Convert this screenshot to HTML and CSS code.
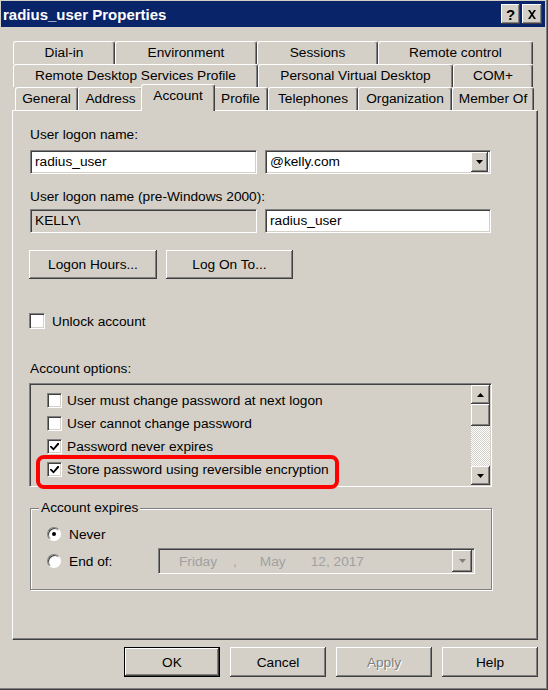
FILE: index.html
```html
<!DOCTYPE html>
<html>
<head>
<meta charset="utf-8">
<link rel="stylesheet" href="styles.css">
</head>
<body>
<div class="window">
  <div class="titlebar">
    <span class="title">radius_user Properties</span>
    <div class="tb-btns">
      <span class="tb-btn tb-help">?</span>
      <span class="tb-btn"><svg width="10" height="9" viewBox="0 0 10 9"><path d="M1 0h2l2 3 2-3h2L6 4.5 9 9H7L5 6 3 9H1l3-4.5z" fill="#000"/></svg></span>
    </div>
  </div>

  <div class="tabs">
    <div class="tab-row row-a">
      <div class="tab w102">Dial-in</div>
      <div class="tab w142">Environment</div>
      <div class="tab w121">Sessions</div>
      <div class="tab w155">Remote control</div>
    </div>
    <div class="tab-row row-a">
      <div class="tab w245">Remote Desktop Services Profile</div>
      <div class="tab w195">Personal Virtual Desktop</div>
      <div class="tab w80">COM+</div>
    </div>
    <div class="tab-row row-c">
      <div class="tab w63">General</div>
      <div class="tab w65">Address</div>
      <div class="tab tab-active">Account</div>
      <div class="tab w55">Profile</div>
      <div class="tab w90">Telephones</div>
      <div class="tab w94">Organization</div>
      <div class="tab w82">Member Of</div>
    </div>
  </div>

  <div class="panel">
    <div class="label">User logon name:</div>
    <div class="field-row gap-top-7">
      <div class="textbox">radius_user</div>
      <div class="textbox combo">
        <span>@kelly.com</span>
        <span class="combo-btn"><svg width="7" height="4" viewBox="0 0 7 4"><path d="M0 0h7L3.5 4z" fill="#000"/></svg></span>
      </div>
    </div>
    <div class="label gap-top-15">User logon name (pre-Windows 2000):</div>
    <div class="field-row gap-top-4">
      <div class="textbox readonly">KELLY\</div>
      <div class="textbox combo-w">radius_user</div>
    </div>
    <div class="btn-row">
      <div class="btn btn-hours">Logon Hours...</div>
      <div class="btn btn-logon">Log On To...</div>
    </div>
    <div class="check-row unlock">
      <span class="checkbox big"></span>
      <span>Unlock account</span>
    </div>
    <div class="label gap-top-32">Account options:</div>
    <div class="listbox">
      <div class="list-items">
        <div class="list-item"><span class="checkbox"></span><span>User must change password at next logon</span></div>
        <div class="list-item"><span class="checkbox"></span><span>User cannot change password</span></div>
        <div class="list-item"><span class="checkbox"><svg width="9" height="8" viewBox="0 0 9 8"><path d="M0 3h1.5l2 2L7.5 0H9v1.5L3.5 7.5 0 4z" fill="#000"/></svg></span><span>Password never expires</span></div>
        <div class="list-item"><span class="checkbox"><svg width="9" height="8" viewBox="0 0 9 8"><path d="M0 3h1.5l2 2L7.5 0H9v1.5L3.5 7.5 0 4z" fill="#000"/></svg></span><span>Store password using reversible encryption</span></div>
      </div>
      <div class="scrollbar">
        <div class="sb-btn"><svg width="7" height="4" viewBox="0 0 7 4"><path d="M0 4h7L3.5 0z" fill="#000"/></svg></div>
        <div class="sb-thumb"></div>
        <div class="sb-track"></div>
        <div class="sb-btn"><svg width="7" height="4" viewBox="0 0 7 4"><path d="M0 0h7L3.5 4z" fill="#000"/></svg></div>
      </div>
      <div class="highlight"></div>
    </div>
    <div class="groupbox">
      <span class="group-label">Account expires</span>
      <div class="radio-row">
        <span class="radio checked"></span>
        <span>Never</span>
      </div>
      <div class="radio-row end-row">
        <span class="radio"></span>
        <span class="end-label">End of:</span>
        <div class="datepicker">
          <span class="d-day">Friday</span>
          <span class="d-comma">,</span>
          <span class="d-month">May</span>
          <span class="d-date">12, 2017</span>
          <span class="dp-btn"><svg width="7" height="4" viewBox="0 0 7 4"><path d="M0 0h7L3.5 4z" fill="#808080"/></svg></span>
        </div>
      </div>
    </div>
  </div>

  <div class="footer">
    <div class="btn fbtn default">OK</div>
    <div class="btn fbtn">Cancel</div>
    <div class="btn fbtn disabled">Apply</div>
    <div class="btn fbtn">Help</div>
  </div>
</div>
</body>
</html>
```
FILE: styles.css
```css
* { box-sizing: border-box; }
html, body { margin: 0; padding: 0; }
body {
  font-family: "Liberation Sans", Arial, sans-serif;
  font-size: 13.7px;
  color: #000;
  background: #d4d0c8;
}
.window {
  width: 548px;
  height: 690px;
  background: #d4d0c8;
  padding: 1px 3px 0 1px;
  box-shadow: inset -1px -1px #404040, inset -2px -2px #808080;
  overflow: hidden;
}
.titlebar {
  height: 26px;
  background: #0a246a;
  display: flex;
  align-items: center;
  justify-content: space-between;
  padding: 0 3px 0 2px;
}
.title {
  color: #fff;
  font-weight: bold;
  font-size: 15px;
}
.tb-btns { display: flex; gap: 2px; }
.tb-btn {
  width: 20px;
  height: 20px;
  background: #d4d0c8;
  box-shadow: inset -1px -1px #404040, inset 1px 1px #fff, inset -2px -2px #808080;
  display: flex;
  align-items: center;
  justify-content: center;
  font-weight: bold;
  font-size: 15px;
  line-height: 1;
}
.tb-help { width: 19px; }

.tabs { margin-top: 14px; }
.tab-row { display: flex; height: 23px; }
.row-a { padding-left: 12px; }
.row-c { padding-left: 14px; }
.tab {
  height: 23px;
  border-top: 1px solid #fff;
  border-left: 1px solid #fff;
  border-right: 1px solid #404040;
  border-radius: 3px 3px 0 0;
  box-shadow: inset -1px 0 #808080;
  text-align: center;
  line-height: 21px;
  white-space: nowrap;
  flex: none;
}
.w102 { width: 102px; } .w142 { width: 142px; } .w121 { width: 121px; } .w155 { width: 155px; }
.w245 { width: 245px; } .w195 { width: 195px; } .w80 { width: 80px; }
.w63 { width: 63px; } .w65 { width: 65px; } .w55 { width: 55px; } .w90 { width: 90px; } .w94 { width: 94px; } .w82 { width: 82px; }
.tab-active {
  position: relative;
  z-index: 2;
  width: 74px;
  margin: -3px -2px 0 -2px;
  height: 27px;
  background: #d4d0c8;
  line-height: 22px;
}

.panel {
  margin-left: 11px;
  width: 526px;
  height: 530px;
  border-top: 1px solid #fff;
  border-left: 1px solid #fff;
  border-right: 1px solid #404040;
  border-bottom: 1px solid #404040;
  box-shadow: inset -1px -1px #808080;
  padding: 16px 0 0 17px;
  position: relative;
}
.label { line-height: 16px; height: 16px; white-space: nowrap; }
.gap-top-7 { margin-top: 7px; }
.gap-top-15 { margin-top: 15px; }
.gap-top-4 { margin-top: 4px; }
.gap-top-32 { margin-top: 32px; }
.field-row { display: flex; gap: 8px; }
.textbox {
  width: 227px;
  height: 24px;
  background: #fff;
  border-top: 1px solid #808080;
  border-left: 1px solid #808080;
  border-right: 1px solid #fff;
  border-bottom: 1px solid #fff;
  box-shadow: inset 1px 1px #404040, inset -1px -1px #d4d0c8;
  padding: 0 4px;
  line-height: 22px;
  white-space: nowrap;
}
.readonly { background: #d4d0c8; }
.combo, .combo-w { width: 226px; }
.combo { display: flex; justify-content: space-between; align-items: center; padding-right: 2px; }
.combo-btn {
  width: 17px;
  height: 20px;
  background: #d4d0c8;
  box-shadow: inset -1px -1px #404040, inset 1px 1px #fff, inset -2px -2px #808080;
  display: flex;
  align-items: center;
  justify-content: center;
}
.btn {
  height: 29px;
  background: #d4d0c8;
  box-shadow: inset -1px -1px #404040, inset 1px 1px #fff, inset -2px -2px #808080;
  display: flex;
  align-items: center;
  justify-content: center;
  white-space: nowrap;
}
.btn-row { display: flex; gap: 9px; margin-top: 17px; margin-left: -1px; }
.btn-hours { width: 128px; }
.btn-logon { width: 127px; }
.check-row { display: flex; align-items: center; gap: 7px; height: 16px; }
.unlock { margin-top: 34px; margin-left: -1px; }
.checkbox {
  width: 15px;
  height: 15px;
  flex: none;
  background: #fff;
  border-top: 1px solid #808080;
  border-left: 1px solid #808080;
  border-right: 1px solid #fff;
  border-bottom: 1px solid #fff;
  box-shadow: inset 1px 1px #404040, inset -1px -1px #d4d0c8;
  display: flex;
  align-items: center;
  justify-content: center;
}
.checkbox.big { width: 16px; height: 16px; }

.listbox {
  position: relative;
  margin-top: 6px;
  margin-left: -1px;
  width: 463px;
  height: 104px;
  background: #d4d0c8;
  border-top: 1px solid #808080;
  border-left: 1px solid #808080;
  border-right: 1px solid #fff;
  border-bottom: 1px solid #fff;
  box-shadow: inset 1px 1px #404040, inset -1px -1px #d4d0c8;
  display: flex;
  padding: 1px 1px 1px 1px;
}
.list-items { flex: 1; padding: 4px 0 0 16px; }
.list-item { display: flex; align-items: center; gap: 5px; height: 23px; white-space: nowrap; }
.scrollbar { width: 19px; display: flex; flex-direction: column; }
.sb-btn, .sb-thumb {
  background: #d4d0c8;
  box-shadow: inset -1px -1px #404040, inset 1px 1px #fff, inset -2px -2px #808080;
  display: flex;
  align-items: center;
  justify-content: center;
}
.sb-btn { height: 19px; }
.sb-thumb { height: 22px; }
.sb-track {
  flex: 1;
  background: repeating-conic-gradient(#d4d0c8 0 25%, #fff 0 50%) 0 0 / 2px 2px;
}
.highlight {
  position: absolute;
  left: 6px;
  top: 71px;
  width: 303px;
  height: 34px;
  border: 4px solid #f00;
  border-radius: 8px;
}

.groupbox {
  position: relative;
  margin-top: 21px;
  width: 462px;
  height: 82px;
  border: 1px solid #808080;
  box-shadow: inset 1px 1px #fff, 1px 1px #fff;
  padding: 17px 0 0 16px;
}
.group-label {
  position: absolute;
  left: 8px;
  top: -9px;
  padding: 0 2px;
  background: #d4d0c8;
  line-height: 16px;
}
.radio-row { display: flex; align-items: center; gap: 8px; height: 16px; }
.end-row { margin-top: 6px; height: 26px; }
.radio {
  width: 14px;
  height: 14px;
  flex: none;
  border-radius: 50%;
  background: #fff;
  border: 1px solid;
  border-color: #808080 #fff #fff #808080;
  box-shadow: inset 1px 1px #404040;
  display: flex;
  align-items: center;
  justify-content: center;
}
.radio.checked::after {
  content: "";
  width: 4px;
  height: 4px;
  border-radius: 50%;
  background: #000;
}
.end-label { width: 81px; flex: none; }
.datepicker {
  width: 317px;
  height: 26px;
  background: #d4d0c8;
  border-top: 1px solid #808080;
  border-left: 1px solid #808080;
  border-right: 1px solid #fff;
  border-bottom: 1px solid #fff;
  box-shadow: inset 1px 1px #404040, inset -1px -1px #d4d0c8;
  display: flex;
  align-items: center;
  color: #a0a0a0;
  padding-left: 20px;
  padding-right: 2px;
  white-space: nowrap;
}
.d-comma { margin-left: 16px; }
.d-month { margin-left: 23px; }
.d-date { margin-left: 25px; }
.dp-btn {
  margin-left: auto;
  width: 20px;
  height: 22px;
  background: #d4d0c8;
  box-shadow: inset -1px -1px #404040, inset 1px 1px #fff, inset -2px -2px #808080;
  display: flex;
  align-items: center;
  justify-content: center;
}

.footer {
  display: flex;
  justify-content: flex-end;
  gap: 10px;
  margin-top: 7px;
  padding-right: 7px;
}
.fbtn { width: 96px; height: 30px; }
.default {
  box-shadow: inset 0 0 0 1px #000, inset -2px -2px #404040, inset 2px 2px #fff, inset -3px -3px #808080;
}
.disabled { color: #808080; text-shadow: 1px 1px #fff; }
```
